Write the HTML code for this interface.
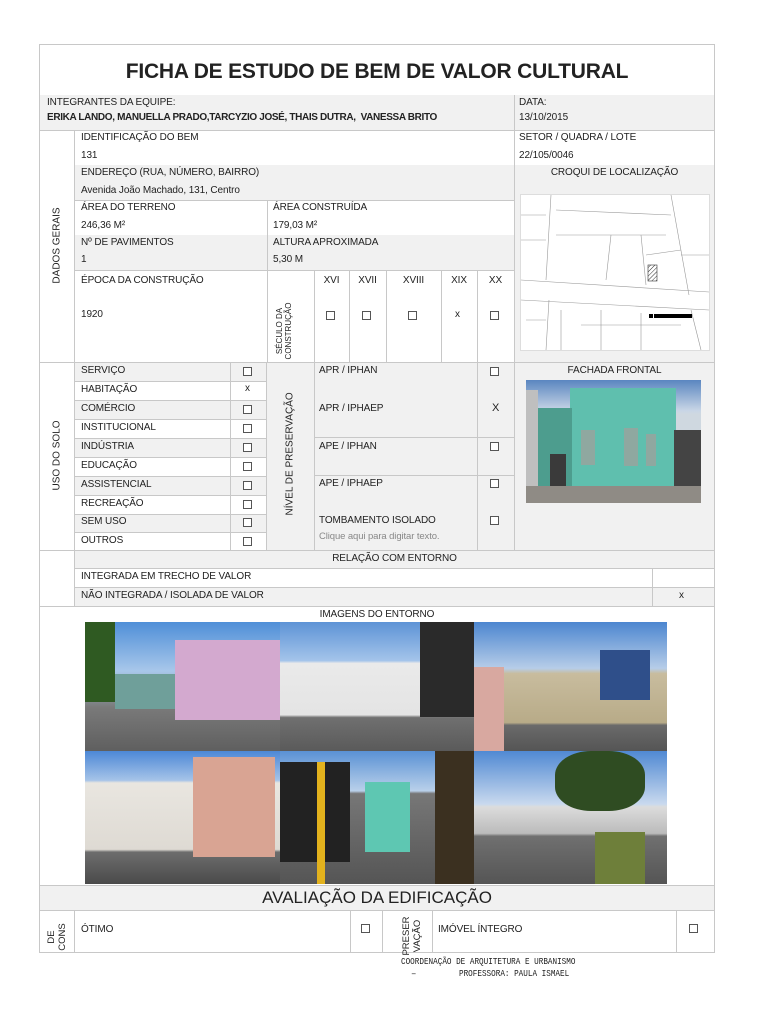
<!DOCTYPE html>
<html><head><meta charset="utf-8"><style>
*{margin:0;padding:0;box-sizing:border-box}
body{width:768px;height:1024px;background:#fff;position:relative;overflow:hidden;font-family:"Liberation Sans",sans-serif;color:#222}
.a{position:absolute}
.g{position:absolute;background:#f1f1f1}
.h{position:absolute;height:1px;background:#c8c8c8}
.v{position:absolute;width:1px;background:#c8c8c8}
.t{position:absolute;font-size:10px;white-space:nowrap;line-height:12px;letter-spacing:-0.1px}
.cb{position:absolute;width:9px;height:9px;border:1px solid #555;background:#fff}
.x{position:absolute;font-size:10px}
.r{position:absolute;transform:rotate(-90deg);transform-origin:center;font-size:10px;white-space:nowrap;text-align:center;line-height:11px}
</style></head><body>
<div class="a" style="left:39px;top:44px;width:676px;height:909px;border:1px solid #c8c8c8"></div>
<div class="a" style="left:39px;top:60px;width:676px;text-align:center;font-weight:bold;font-size:21px;letter-spacing:-0.2px">FICHA DE ESTUDO DE BEM DE VALOR CULTURAL</div>

<div class="g" style="left:40px;top:95px;width:674px;height:35px"></div>
<div class="g" style="left:75px;top:165px;width:439px;height:35px"></div>
<div class="g" style="left:75px;top:235px;width:439px;height:35px"></div>
<div class="g" style="left:515px;top:165px;width:199px;height:197px"></div>
<div class="a" style="left:520px;top:194px;width:190px;height:157px;background:#fff;border:1px solid #ddd"></div>
<div class="g" style="left:75px;top:362px;width:155px;height:19px"></div>
<div class="g" style="left:75px;top:400px;width:155px;height:19px"></div>
<div class="g" style="left:75px;top:438px;width:155px;height:19px"></div>
<div class="g" style="left:75px;top:476px;width:155px;height:19px"></div>
<div class="g" style="left:75px;top:514px;width:155px;height:18px"></div>
<div class="g" style="left:231px;top:362px;width:35px;height:19px"></div>
<div class="g" style="left:231px;top:400px;width:35px;height:19px"></div>
<div class="g" style="left:231px;top:438px;width:35px;height:19px"></div>
<div class="g" style="left:231px;top:476px;width:35px;height:19px"></div>
<div class="g" style="left:231px;top:514px;width:35px;height:18px"></div>
<div class="g" style="left:267px;top:362px;width:447px;height:188px"></div>
<div class="g" style="left:75px;top:550px;width:639px;height:18px"></div>
<div class="g" style="left:75px;top:587px;width:639px;height:19px"></div>
<div class="g" style="left:40px;top:885px;width:674px;height:25px"></div>

<div class="h" style="left:40px;top:130px;width:674px"></div>
<div class="h" style="left:75px;top:200px;width:439px"></div>
<div class="h" style="left:75px;top:270px;width:439px"></div>
<div class="h" style="left:40px;top:362px;width:674px"></div>
<div class="h" style="left:75px;top:381px;width:191px"></div>
<div class="h" style="left:75px;top:400px;width:191px"></div>
<div class="h" style="left:75px;top:419px;width:191px"></div>
<div class="h" style="left:75px;top:438px;width:191px"></div>
<div class="h" style="left:75px;top:457px;width:191px"></div>
<div class="h" style="left:75px;top:476px;width:191px"></div>
<div class="h" style="left:75px;top:495px;width:191px"></div>
<div class="h" style="left:75px;top:514px;width:191px"></div>
<div class="h" style="left:75px;top:532px;width:191px"></div>
<div class="h" style="left:314px;top:437px;width:200px"></div>
<div class="h" style="left:314px;top:475px;width:200px"></div>
<div class="h" style="left:40px;top:550px;width:674px"></div>
<div class="h" style="left:75px;top:568px;width:639px"></div>
<div class="h" style="left:75px;top:587px;width:639px"></div>
<div class="h" style="left:40px;top:606px;width:674px"></div>
<div class="h" style="left:40px;top:885px;width:674px"></div>
<div class="h" style="left:40px;top:910px;width:674px"></div>

<div class="v" style="left:514px;top:95px;height:455px"></div>
<div class="v" style="left:74px;top:130px;height:476px"></div>
<div class="v" style="left:267px;top:200px;height:162px"></div>
<div class="v" style="left:314px;top:270px;height:92px"></div>
<div class="v" style="left:349px;top:270px;height:92px"></div>
<div class="v" style="left:386px;top:270px;height:92px"></div>
<div class="v" style="left:441px;top:270px;height:92px"></div>
<div class="v" style="left:477px;top:270px;height:92px"></div>
<div class="v" style="left:230px;top:362px;height:188px"></div>
<div class="v" style="left:266px;top:362px;height:188px"></div>
<div class="v" style="left:314px;top:362px;height:188px"></div>
<div class="v" style="left:477px;top:362px;height:188px"></div>
<div class="v" style="left:652px;top:568px;height:38px"></div>
<div class="v" style="left:74px;top:910px;height:42px"></div>
<div class="v" style="left:350px;top:910px;height:42px"></div>
<div class="v" style="left:382px;top:910px;height:42px"></div>
<div class="v" style="left:432px;top:910px;height:42px"></div>
<div class="v" style="left:676px;top:910px;height:42px"></div>

<div class="t" style="left:47px;top:97px">INTEGRANTES DA EQUIPE:</div>
<div class="t" style="left:47px;top:112px;font-size:10px;font-weight:bold;letter-spacing:-0.35px">ERIKA LANDO, MANUELLA PRADO,TARCYZIO JOSÉ, THAIS DUTRA,&nbsp; VANESSA BRITO</div>
<div class="t" style="left:519px;top:97px">DATA:</div>
<div class="t" style="left:519px;top:112px">13/10/2015</div>

<div class="t" style="left:81px;top:132px">IDENTIFICAÇÃO DO BEM</div>
<div class="t" style="left:81px;top:150px">131</div>
<div class="t" style="left:519px;top:132px">SETOR / QUADRA / LOTE</div>
<div class="t" style="left:519px;top:150px">22/105/0046</div>
<div class="t" style="left:81px;top:167px">ENDEREÇO (RUA, NÚMERO, BAIRRO)</div>
<div class="t" style="left:81px;top:185px">Avenida João Machado, 131, Centro</div>
<div class="t" style="left:515px;top:167px;width:199px;text-align:center">CROQUI DE LOCALIZAÇÃO</div>
<div class="t" style="left:81px;top:202px">ÁREA DO TERRENO</div>
<div class="t" style="left:81px;top:220px">246,36 M²</div>
<div class="t" style="left:273px;top:202px">ÁREA CONSTRUÍDA</div>
<div class="t" style="left:273px;top:220px">179,03 M²</div>
<div class="t" style="left:81px;top:237px">Nº DE PAVIMENTOS</div>
<div class="t" style="left:81px;top:254px">1</div>
<div class="t" style="left:273px;top:237px">ALTURA APROXIMADA</div>
<div class="t" style="left:273px;top:254px">5,30 M</div>
<div class="t" style="left:81px;top:275px">ÉPOCA DA CONSTRUÇÃO</div>
<div class="t" style="left:81px;top:309px">1920</div>
<div class="r" style="left:244px;top:322px;width:80px;font-size:8px;line-height:9px">SÉCULO DA<br>CONSTRUÇÃO</div>
<div class="t" style="left:314px;top:275px;width:35px;text-align:center">XVI</div>
<div class="t" style="left:349px;top:275px;width:37px;text-align:center">XVII</div>
<div class="t" style="left:386px;top:275px;width:55px;text-align:center">XVIII</div>
<div class="t" style="left:441px;top:275px;width:36px;text-align:center">XIX</div>
<div class="t" style="left:477px;top:275px;width:37px;text-align:center">XX</div>
<div class="cb" style="left:326px;top:311px"></div>
<div class="cb" style="left:362px;top:311px"></div>
<div class="cb" style="left:408px;top:311px"></div>
<div class="x" style="left:455px;top:309px">x</div>
<div class="cb" style="left:490px;top:311px"></div>
<div class="r" style="left:17px;top:240px;width:80px">DADOS GERAIS</div>

<div class="r" style="left:17px;top:450px;width:80px">USO DO SOLO</div>
<div class="t" style="left:81px;top:365px">SERVIÇO</div>
<div class="t" style="left:81px;top:384px">HABITAÇÃO</div>
<div class="t" style="left:81px;top:403px">COMÉRCIO</div>
<div class="t" style="left:81px;top:422px">INSTITUCIONAL</div>
<div class="t" style="left:81px;top:441px">INDÚSTRIA</div>
<div class="t" style="left:81px;top:460px">EDUCAÇÃO</div>
<div class="t" style="left:81px;top:479px">ASSISTENCIAL</div>
<div class="t" style="left:81px;top:498px">RECREAÇÃO</div>
<div class="t" style="left:81px;top:516px">SEM USO</div>
<div class="t" style="left:81px;top:535px">OUTROS</div>
<div class="cb" style="left:243px;top:367px"></div>
<div class="x" style="left:245px;top:383px">x</div>
<div class="cb" style="left:243px;top:405px"></div>
<div class="cb" style="left:243px;top:424px"></div>
<div class="cb" style="left:243px;top:443px"></div>
<div class="cb" style="left:243px;top:462px"></div>
<div class="cb" style="left:243px;top:481px"></div>
<div class="cb" style="left:243px;top:500px"></div>
<div class="cb" style="left:243px;top:518px"></div>
<div class="cb" style="left:243px;top:537px"></div>
<div class="r" style="left:230px;top:450px;width:120px">NÍVEL DE PRESERVAÇÃO</div>
<div class="t" style="left:319px;top:365px">APR / IPHAN</div>
<div class="t" style="left:319px;top:403px">APR / IPHAEP</div>
<div class="t" style="left:319px;top:441px">APE / IPHAN</div>
<div class="t" style="left:319px;top:478px">APE / IPHAEP</div>
<div class="t" style="left:319px;top:515px">TOMBAMENTO ISOLADO</div>
<div class="t" style="left:319px;top:531px;color:#888;font-size:9.5px">Clique aqui para digitar texto.</div>
<div class="cb" style="left:490px;top:367px"></div>
<div class="x" style="left:492px;top:402px;font-size:11px">X</div>
<div class="cb" style="left:490px;top:442px"></div>
<div class="cb" style="left:490px;top:479px"></div>
<div class="cb" style="left:490px;top:516px"></div>
<div class="t" style="left:515px;top:365px;width:199px;text-align:center">FACHADA FRONTAL</div>
<div class="a" style="left:526px;top:380px;width:175px;height:123px;background:linear-gradient(#5a86c0 0%,#c9d6e6 25%,#cfd8e0 28%,#cfd8e0 100%);overflow:hidden">
 <div class="a" style="left:44px;top:8px;width:106px;height:98px;background:#5fbfae"></div>
 <div class="a" style="left:10px;top:28px;width:36px;height:78px;background:#4d9d8e"></div>
 <div class="a" style="left:0;top:10px;width:12px;height:96px;background:#bfbfbf"></div>
 <div class="a" style="left:148px;top:50px;width:27px;height:56px;background:#444"></div>
 <div class="a" style="left:55px;top:50px;width:14px;height:35px;background:#8fa8a0"></div>
 <div class="a" style="left:98px;top:48px;width:14px;height:38px;background:#8fa8a0"></div>
 <div class="a" style="left:120px;top:54px;width:10px;height:32px;background:#8fa8a0"></div>
 <div class="a" style="left:24px;top:74px;width:16px;height:32px;background:#3a3a3a"></div>
 <div class="a" style="left:0;top:106px;width:175px;height:17px;background:#8f8b85"></div>
</div>

<div class="t" style="left:75px;top:553px;width:639px;text-align:center">RELAÇÃO COM ENTORNO</div>
<div class="t" style="left:81px;top:571px">INTEGRADA EM TRECHO DE VALOR</div>
<div class="t" style="left:81px;top:590px">NÃO INTEGRADA / ISOLADA DE VALOR</div>
<div class="x" style="left:679px;top:590px">x</div>
<div class="t" style="left:40px;top:609px;width:674px;text-align:center">IMAGENS DO ENTORNO</div>

<div class="a" style="left:85px;top:622px;width:582px;height:262px;background:#777;overflow:hidden">
 <div class="a" style="left:0;top:0;width:195px;height:129px;background:linear-gradient(#4f8fd8 0%,#a8c7ea 38%,#7a7a7a 66%,#5f5f5f 100%)"></div>
 <div class="a" style="left:90px;top:18px;width:105px;height:80px;background:#d3a9cf"></div>
 <div class="a" style="left:0;top:0;width:30px;height:80px;background:#2f5a22"></div>
 <div class="a" style="left:30px;top:52px;width:60px;height:35px;background:#6f9f9a"></div>
 <div class="a" style="left:195px;top:0;width:194px;height:129px;background:linear-gradient(#5d93d6 0%,#a4c4ea 30%,#eaeaea 32%,#e4e4e4 72%,#707070 74%,#5a5a5a 100%)"></div>
 <div class="a" style="left:335px;top:0;width:54px;height:95px;background:#2a2a2a"></div>
 <div class="a" style="left:389px;top:0;width:193px;height:129px;background:linear-gradient(#4c86d0 0%,#b7cde8 36%,#c8bc9e 40%,#b8ab88 78%,#6a6a6a 80%,#555 100%)"></div>
 <div class="a" style="left:515px;top:28px;width:50px;height:50px;background:#2f4f8a"></div>
 <div class="a" style="left:389px;top:45px;width:30px;height:84px;background:#d8a8a0"></div>
 <div class="a" style="left:0;top:129px;width:195px;height:133px;background:linear-gradient(#4d88d6 0%,#a5c3e8 22%,#e9e6e0 24%,#dedad3 74%,#6d6d6d 76%,#4a4a4a 100%)"></div>
 <div class="a" style="left:108px;top:135px;width:82px;height:100px;background:#d9a493"></div>
 <div class="a" style="left:195px;top:129px;width:194px;height:133px;background:linear-gradient(#5a91d4 0%,#b9d0ea 30%,#777 32%,#555 100%)"></div>
 <div class="a" style="left:195px;top:140px;width:70px;height:100px;background:#222"></div>
 <div class="a" style="left:280px;top:160px;width:45px;height:70px;background:#5ec7b2"></div>
 <div class="a" style="left:232px;top:140px;width:8px;height:122px;background:#e3b21d"></div>
 <div class="a" style="left:350px;top:129px;width:39px;height:133px;background:#3b3020"></div>
 <div class="a" style="left:389px;top:129px;width:193px;height:133px;background:linear-gradient(#5089d3 0%,#c9d9ee 40%,#dcdcdc 42%,#bbb 62%,#707070 64%,#555 100%)"></div>
 <div class="a" style="left:470px;top:129px;width:90px;height:60px;background:#2f4c22;border-radius:40%"></div>
 <div class="a" style="left:510px;top:210px;width:50px;height:52px;background:#6e7f3a"></div>
</div>

<div class="a" style="left:40px;top:886px;width:674px;text-align:center;font-size:17px;line-height:24px">AVALIAÇÃO DA EDIFICAÇÃO</div>
<div class="r" style="left:32px;top:926px;width:50px;font-size:9.5px;line-height:11px">DE<br>CONS</div>
<div class="t" style="left:81px;top:924px">ÓTIMO</div>
<div class="cb" style="left:361px;top:924px"></div>
<div class="r" style="left:382px;top:925px;width:60px;font-size:9.5px;line-height:11px">PRESER<br>VAÇÃO</div>
<div class="t" style="left:438px;top:924px">IMÓVEL ÍNTEGRO</div>
<div class="cb" style="left:689px;top:924px"></div>

<div class="a" style="left:401px;top:956px;font-family:'Liberation Mono',monospace;font-size:9px;line-height:12px;white-space:nowrap;transform:scaleX(0.85);transform-origin:left">COORDENAÇÃO DE ARQUITETURA E URBANISMO</div>
<div class="a" style="left:411px;top:968px;font-family:'Liberation Mono',monospace;font-size:9px;line-height:12px;white-space:nowrap">–</div>
<div class="a" style="left:459px;top:968px;font-family:'Liberation Mono',monospace;font-size:9px;line-height:12px;white-space:nowrap;transform:scaleX(0.85);transform-origin:left">PROFESSORA: PAULA ISMAEL</div>

<svg class="a" style="left:521px;top:195px" width="188" height="155" viewBox="0 0 188 155" fill="none" stroke="#999" stroke-width="0.6">
 <path d="M0 85 L188 97 M0 105 L188 115"/>
 <path d="M30 0 L25 85 M28 105 L25 155 M150 0 L168 100 M170 115 L180 155"/>
 <path d="M0 20 L25 20 M0 45 L25 45 M35 15 L150 20 M35 40 L145 40 M90 40 L85 85 M120 40 L125 90 M5 125 L25 125 M40 115 L40 155 M80 115 L80 155 M120 118 L120 155 M60 130 L160 130 M160 60 L188 60 M125 60 L160 55"/>
 <defs><pattern id="hat" width="3" height="3" patternUnits="userSpaceOnUse" patternTransform="rotate(45)"><line x1="0" y1="0" x2="0" y2="3" stroke="#333" stroke-width="1"/></pattern></defs>
 <rect x="127" y="70" width="9" height="16" fill="url(#hat)" stroke="#333"/>
 <rect x="133" y="119" width="38" height="4" fill="#000" stroke="none"/>
 <rect x="128" y="119" width="4" height="4" fill="#000" stroke="none"/>
</svg>
</body></html>
